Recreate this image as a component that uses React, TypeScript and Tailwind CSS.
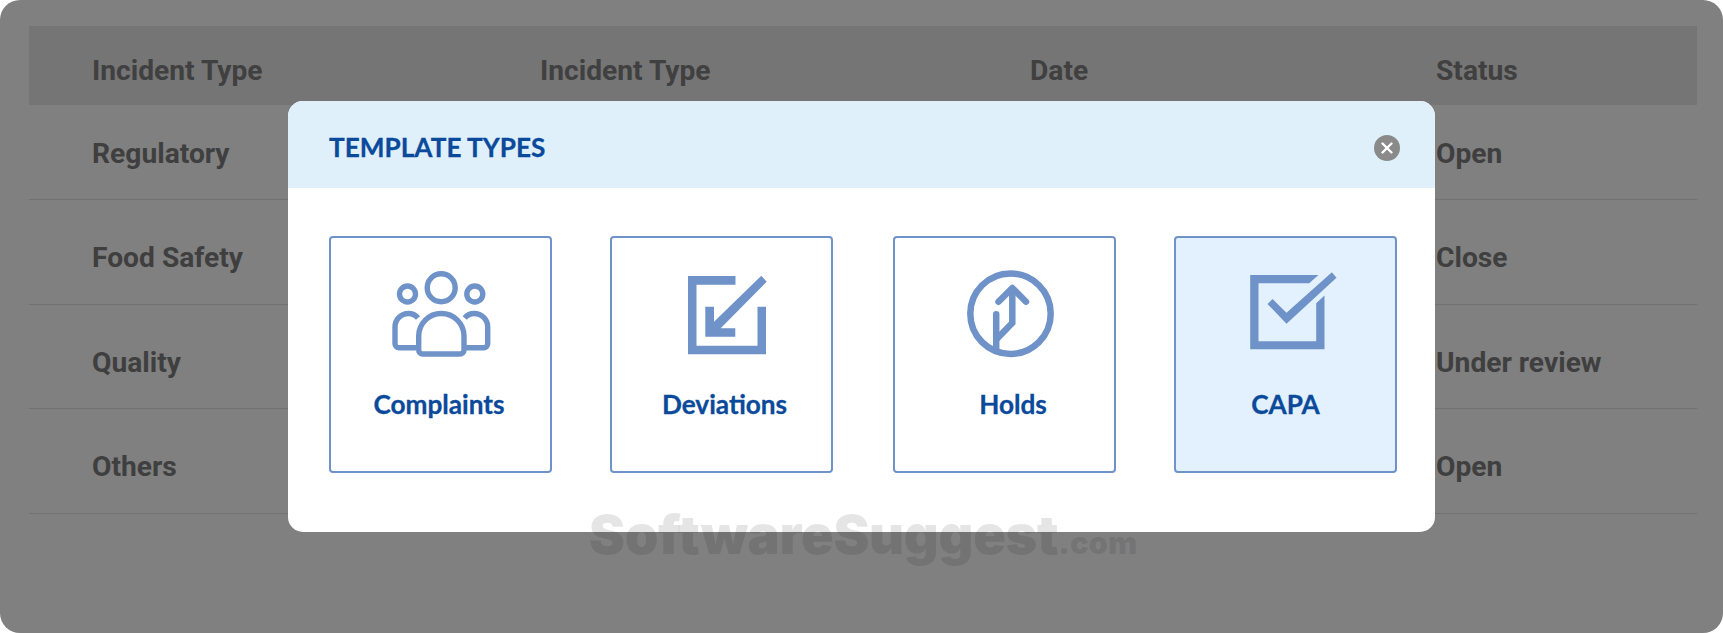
import { X } from "lucide-react";

const rows = [
  { type: "Regulatory", status: "Open" },
  { type: "Food Safety", status: "Close" },
  { type: "Quality", status: "Under review" },
  { type: "Others", status: "Open" },
];

function ComplaintsIcon() {
  return (
    <svg viewBox="0 0 100 100" className="h-[100px] w-[100px] overflow-visible" fill="none" stroke="#6f93c8" strokeWidth="5.4">
      <circle cx="50.2" cy="22.7" r="14" />
      <circle cx="16.5" cy="29" r="8" />
      <circle cx="83.8" cy="29" r="8" />
      <path d="M27.7 71a22.65 22.5 0 0 1 45.3 0v14a4 4 0 0 1-4 4H31.7a4 4 0 0 1-4-4Z" />
      <path d="M27.7 82.8H8a4 4 0 0 1-4-4V62a13.5 13.5 0 0 1 13.5-13.5c3.8 0 7 1.5 9.5 4.5" />
      <path d="M73 82.8h19.7a4 4 0 0 0 4-4V62a13.5 13.5 0 0 0-13.5-13.5c-3.8 0-7 1.5-9.5 4.5" />
    </svg>
  );
}

function DeviationsIcon() {
  return (
    <svg viewBox="0 0 100 100" className="h-[100px] w-[100px] overflow-visible" fill="#6f93c8">
      <path d="M16 11H63.5V19.7H24.5V80.7H85.5V41.7H94V89.3H16Z" />
      <path d="M33.3 41.7H42V56.7L89.3 10.7L94.7 16.7L48.7 63.3H63.3V71.7H33.3Z" />
    </svg>
  );
}

function HoldsIcon() {
  return (
    <svg viewBox="0 0 100 100" className="h-[100px] w-[100px] overflow-visible" fill="none" stroke="#6f93c8" strokeWidth="6.5" strokeLinecap="round" strokeLinejoin="round">
      <circle cx="55.5" cy="48.7" r="40.2" />
      <path d="M43.5 36.7L57.3 23L71 36.7" />
      <path d="M57.3 23V58L41.2 74.5" strokeLinecap="butt" strokeLinejoin="miter" />
      <path d="M41.2 49.3V85" />
    </svg>
  );
}

function CapaIcon() {
  return (
    <svg viewBox="0 0 100 100" className="h-[100px] w-[100px] overflow-visible" fill="#6f93c8">
      <path d="M14.2 10H82.5L73.2 18.3H22.5V76.3H80.2V38.3L88.5 30.5V84.3H14.2Z" />
      <path d="M31.5 39L36.5 34L50.5 47.7L95.9 7.3L100.5 12.7L50.5 58.7Z" />
    </svg>
  );
}

const templates = [
  { label: "Complaints", icon: <ComplaintsIcon />, bg: "bg-white", shift: "-ml-[3px]", gap: "mr-[58px]" },
  { label: "Deviations", icon: <DeviationsIcon />, bg: "bg-white", shift: "ml-[6px]", gap: "mr-[60px]" },
  { label: "Holds", icon: <HoldsIcon />, bg: "bg-white", shift: "ml-[17px]", gap: "mr-[58px]" },
  { label: "CAPA", icon: <CapaIcon />, bg: "bg-[#e2f1fd]", shift: "ml-0", gap: "mr-0" },
];

export default function App() {
  return (
    <div className="relative h-[633px] w-[1723px] overflow-hidden bg-white font-['Roboto',sans-serif]">
      <div className="h-full rounded-[20px] bg-[#808080] pl-[29px] pr-[26px] pt-[26px] text-[28.2px] font-bold text-[#3f3f3f]">
        <div className="grid h-[79px] grid-cols-[448px_490px_406px_1fr] items-center bg-[#757575] pl-[63px] pt-[11px] text-[#404040]">
          <span>Incident Type</span>
          <span>Incident Type</span>
          <span>Date</span>
          <span>Status</span>
        </div>
        {rows.map((row, i) => (
          <div
            key={row.type}
            className={
              i === 0
                ? "grid h-[95px] grid-cols-[1344px_1fr] items-center border-b border-[#727272] pl-[63px] pt-[4px]"
                : "grid h-[104.5px] grid-cols-[1344px_1fr] items-center border-b border-[#727272] pl-[63px] pt-[13px]"
            }
          >
            <span>{row.type}</span>
            <span>{row.status}</span>
          </div>
        ))}
      </div>

      <div className="absolute left-[288px] top-[101px] h-[431px] w-[1147px] overflow-hidden rounded-[15px] bg-white font-['Lato',sans-serif]">
        <div className="flex h-[87px] items-center justify-between bg-[#dff0fb] pl-[41px] pr-[35px] pt-[6px]">
          <h2 className="text-[26.2px] font-bold text-[#0b4a9b] [-webkit-text-stroke:0.3px_#0b4a9b]">TEMPLATE TYPES</h2>
          <button className="flex h-[26px] w-[26px] items-center justify-center rounded-full bg-[#8a8a8a]">
            <X className="h-[18px] w-[18px] text-white" strokeWidth={3.2} />
          </button>
        </div>
        <div className="flex pl-[41px] pt-[48px]">
          {templates.map((t) => (
            <div
              key={t.label}
              className={`flex h-[237px] w-[223px] flex-col items-center rounded-[4px] border-2 border-[#6f93c8] pt-[27px] ${t.bg} ${t.gap}`}
            >
              {t.icon}
              <span className={`mt-[24px] text-[26.2px] font-bold leading-[30px] text-[#0b4a9b] [-webkit-text-stroke:0.3px_#0b4a9b] ${t.shift}`}>{t.label}</span>
            </div>
          ))}
        </div>
      </div>

      <div className="absolute left-[589px] top-[503px] flex items-baseline font-['Inter',sans-serif] font-black leading-[64px] text-black/10">
        <span className="text-[54px] tracking-[-0.3px]">SoftwareSuggest</span>
        <span className="text-[31px]">.com</span>
      </div>
    </div>
  );
}
